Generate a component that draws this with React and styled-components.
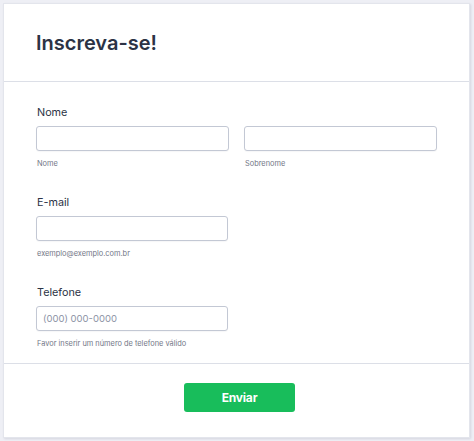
import React from "react";
import styled, { createGlobalStyle } from "styled-components";

const Global = createGlobalStyle`
  html, body { margin: 0; padding: 0; background: #eeeff5; }
  body { font-family: Inter, "Noto Sans", Arial, sans-serif; }
  * { box-sizing: border-box; }
`;

const Page = styled.div`
  padding: 3px 4px 4px 3px;
`;

const Card = styled.div`
  background: #fff;
  border: 1px solid #e3e5ec;
  box-shadow: 1px 1px 2px rgba(40, 45, 80, 0.12);
`;

const Header = styled.div`
  height: 78px;
  display: flex;
  align-items: center;
  padding: 0 32px;
  border-bottom: 1px solid #dcdfe7;
`;

const Title = styled.h1`
  margin: 0;
  font-size: 20px;
  font-weight: 600;
  color: #2c3345;
`;

const Body = styled.div`
  padding: 23px 32px 14px;
  display: flex;
  flex-direction: column;
  gap: 26px;
`;

const Field = styled.div`
  display: flex;
  flex-direction: column;
`;

const Label = styled.label`
  font-size: 10.8px;
  line-height: 15px;
  color: #2c3345;
  margin: 0 0 6px 1px;
`;

const Row = styled.div`
  display: grid;
  grid-template-columns: 193px 193px;
  column-gap: 15px;
`;

const Col = styled.div`
  display: flex;
  flex-direction: column;
`;

const Input = styled.input`
  width: ${(p) => p.$w || "193px"};
  height: 25px;
  border: 1px solid #c3c8d4;
  border-radius: 3px;
  padding: 0 6px;
  font-family: inherit;
  font-size: 9.5px;
  color: #2c3345;
  background: #fff;
  box-shadow: 0 1px 1px rgba(40, 45, 80, 0.04);
  &::placeholder { color: #8d93a6; }
`;

const Sub = styled.span`
  font-size: 7.4px;
  line-height: 11px;
  color: #737787;
  margin: 7px 0 0 1px;
`;

const Footer = styled.div`
  border-top: 1px solid #dcdfe7;
  display: flex;
  justify-content: center;
  padding: 19px 0 25px;
`;

const Button = styled.button`
  width: 111px;
  height: 29px;
  border: none;
  border-radius: 3px;
  background: #18bd5b;
  color: #fff;
  font-family: inherit;
  font-size: 12px;
  font-weight: 700;
  letter-spacing: -0.2px;
  margin-left: 6px;
`;

export default function App() {
  return (
    <>
      <Global />
      <Page>
        <Card>
          <Header>
            <Title>Inscreva-se!</Title>
          </Header>
          <Body>
            <Field>
              <Label>Nome</Label>
              <Row>
                <Col>
                  <Input />
                  <Sub>Nome</Sub>
                </Col>
                <Col>
                  <Input />
                  <Sub>Sobrenome</Sub>
                </Col>
              </Row>
            </Field>
            <Field>
              <Label>E-mail</Label>
              <Input $w="192px" />
              <Sub>exemplo@exemplo.com.br</Sub>
            </Field>
            <Field>
              <Label>Telefone</Label>
              <Input $w="192px" placeholder="(000) 000-0000" />
              <Sub>Favor inserir um número de telefone válido</Sub>
            </Field>
          </Body>
          <Footer>
            <Button>Enviar</Button>
          </Footer>
        </Card>
      </Page>
    </>
  );
}
